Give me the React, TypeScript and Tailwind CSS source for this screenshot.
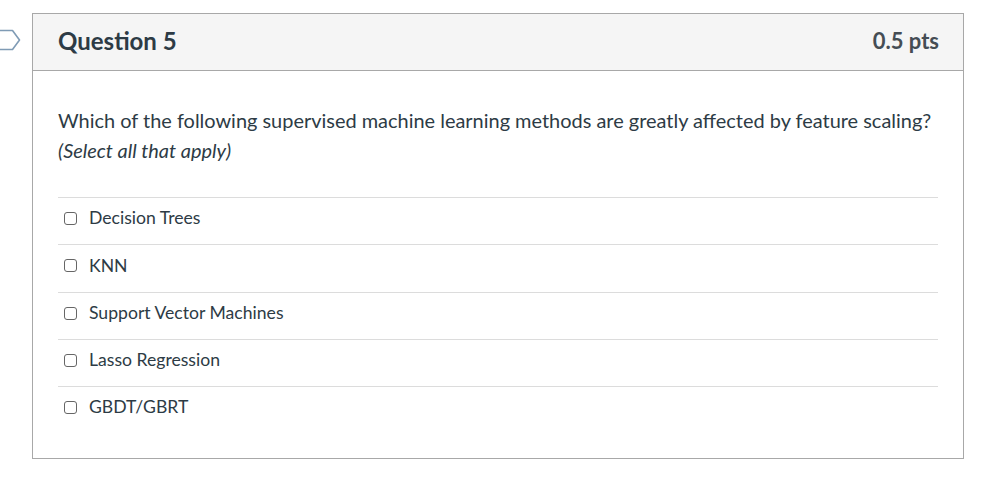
import React from "react";

const options = [
  "Decision Trees",
  "KNN",
  "Support Vector Machines",
  "Lasso Regression",
  "GBDT/GBRT",
];

export default function App() {
  return (
    <div
      className="relative w-[1006px] h-[480px] bg-white text-[#2d3b45]"
      style={{ fontFamily: "Lato, 'Liberation Sans', sans-serif" }}
    >
      <svg
        className="absolute left-0 top-[28px]"
        width="22"
        height="24"
        viewBox="0 0 22 24"
      >
        <path
          d="M-4 2.5 H12.5 L19.5 12 L12.5 21.5 H-4"
          fill="#ffffff"
          stroke="#7f9bb5"
          strokeWidth="1.6"
          strokeLinejoin="round"
        />
      </svg>
      <div className="pt-[13px] pl-[32px]">
        <div className="w-[932px] h-[446px] border border-[#a8a8a8] flex flex-col">
          <div className="h-[57px] bg-[#f5f5f5] border-b border-[#a8a8a8] flex items-center justify-between pl-[25px] pr-[24px] pb-[3px]">
            <span className="text-[24px] font-bold">Question 5</span>
            <span className="text-[22px] font-bold text-[#454d54]">0.5 pts</span>
          </div>
          <div className="px-[25px] pt-[34px]">
            <div className="text-[19.94px] leading-[30px] whitespace-nowrap">
              Which of the following supervised machine learning methods are greatly affected by feature scaling?
            </div>
            <div className="text-[19.94px] leading-[30px] italic">(Select all that apply)</div>
            <div className="mt-[32px]">
              {options.map((o) => (
                <div
                  key={o}
                  className="h-[47.25px] border-t border-[#dcdcdc] flex items-center pl-[6px] pb-[5px]"
                >
                  <span className="w-[13px] h-[13px] border-[1.5px] border-[#666666] rounded-[3px] bg-white" />
                  <span className="ml-[12px] text-[17.6px]">{o}</span>
                </div>
              ))}
            </div>
          </div>
        </div>
      </div>
    </div>
  );
}
